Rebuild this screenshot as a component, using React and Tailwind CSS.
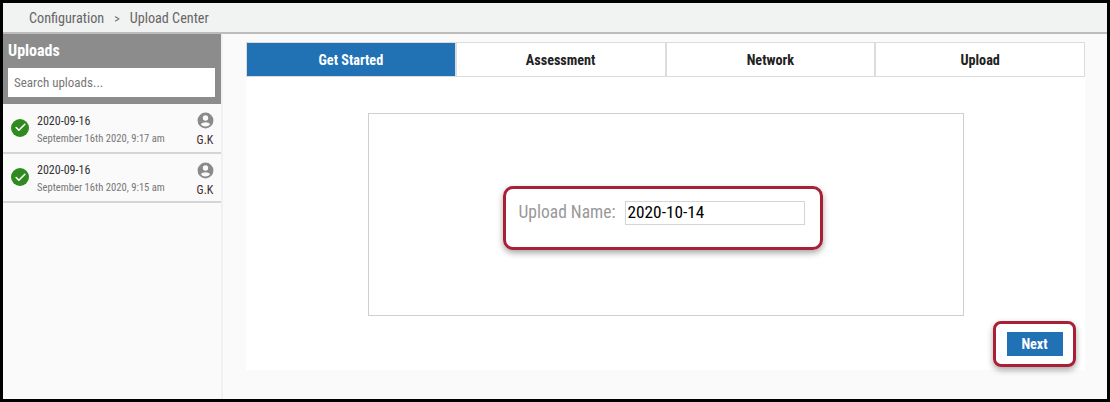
import React from 'react';
import { Check } from 'lucide-react';

const uploads = [
  { id: 1, name: '2020-09-16', when: 'September 16th 2020, 9:17 am', by: 'G.K' },
  { id: 2, name: '2020-09-16', when: 'September 16th 2020, 9:15 am', by: 'G.K' },
];
const tabs = ['Get Started', 'Assessment', 'Network', 'Upload'];

function UserIcon() {
  return (
    <svg viewBox="0 0 24 24" className="w-[19px] h-[19px]" fill="#8a8a8a">
      <path d="M12 2a10 10 0 1 0 0 20 10 10 0 0 0 0-20zm0 3.4a3.4 3.4 0 1 1 0 6.8 3.4 3.4 0 0 1 0-6.8zm0 14.3a7.7 7.7 0 0 1-6-2.9c.9-1.7 3.9-2.6 6-2.6s5.1.9 6 2.6a7.7 7.7 0 0 1-6 2.9z" />
    </svg>
  );
}

function UploadRow({ item }) {
  return (
    <div className="h-[49.5px] flex items-center pl-2 pr-[7px] border-b-2 border-[#d4d6d6]">
      <div className="w-[18px] h-[18px] rounded-full bg-[#2f8a1f] flex items-center justify-center shrink-0">
        <Check size={13} strokeWidth={3} color="#fff" />
      </div>
      <div className="ml-2 flex-1 pt-[4px]">
        <div className="text-[12px] leading-[16px] text-[#333] [font-stretch:75%]">{item.name}</div>
        <div className="text-[10.6px] leading-[16px] mt-[2px] text-[#777] [font-stretch:75%]">{item.when}</div>
      </div>
      <div className="w-[18px] flex flex-col items-center pt-[3px]">
        <UserIcon />
        <div className="text-[12px] leading-[14px] mt-[3px] text-[#4a2a30] [font-stretch:75%]">{item.by}</div>
      </div>
    </div>
  );
}

export default function App() {
  return (
    <div className="w-[1110px] h-[402px] overflow-hidden border-[3px] border-black flex flex-col bg-[#fafafa] font-['Roboto',sans-serif]">
      <div className="h-[31px] shrink-0 bg-[#f1f2f2] border-b-2 border-[#bcbcbc] flex items-center pl-[26px] pt-[3px] text-[14.2px] text-[#666] [font-stretch:75%]">
        <span>Configuration</span>
        <span className="mx-[10px] text-[12px]">&gt;</span>
        <span>Upload Center</span>
      </div>
      <div className="flex flex-1 min-h-0">
        <aside className="w-[220px] shrink-0 border-r-2 border-[#f1f1f1] bg-[#fafafa]">
          <div className="h-[70px] bg-[#8c8c8c] px-[5px] pt-[6px]">
            <div className="text-[16px] leading-[20px] pt-[1px] font-bold text-white [font-stretch:75%]">Uploads</div>
            <input
              placeholder="Search uploads..."
              className="mt-[7px] w-[207px] h-[29px] bg-white px-[6px] text-[13px] outline-none placeholder:text-[#777] [font-stretch:75%]"
            />
          </div>
          {uploads.map(u => <UploadRow key={u.id} item={u} />)}
        </aside>
        <main className="flex-1 pl-[23px] pr-[22px] pt-[8px]">
          <div className="h-[328px] bg-white flex flex-col">
            <div className="flex h-[35px] shrink-0">
              {tabs.map((t, i) => (
                <div
                  key={t}
                  className={`flex-1 flex items-center justify-center pt-[3px] text-[14.2px] font-bold [font-stretch:75%] border border-[#dcdcdc] ${i === 0 ? 'bg-[#2072b5] text-white' : 'bg-white text-[#222]'}`}
                >
                  {t}
                </div>
              ))}
            </div>
            <div className="mt-[36px] ml-[122px] w-[596px] h-[203px] shrink-0 border border-[#cfcfcf] flex items-center justify-center">
              <div className="w-[320px] h-[64px] mr-[7px] mt-[6px] pb-[10px] rounded-[10px] border-[3px] border-[#a92036] shadow-[0_3px_6px_rgba(0,0,0,0.35)] flex items-center pl-[13px]">
                <span className="text-[17.5px] text-[#999] [font-stretch:75%]">Upload Name:</span>
                <input
                  defaultValue="2020-10-14"
                  className="ml-[9px] w-[180px] h-[24px] border border-[#d5d5d5] px-[2px] text-[17.3px] text-black outline-none [font-stretch:87%]"
                />
              </div>
            </div>
            <div className="flex justify-end pr-[9px] mt-[5px]">
              <div className="w-[83px] h-[46px] rounded-[8px] border-[3px] border-[#a92036] shadow-[0_3px_6px_rgba(0,0,0,0.35)] flex items-center justify-center">
                <button className="w-[56px] h-[24px] pt-[2px] bg-[#2072b5] text-white text-[14.2px] font-bold [font-stretch:75%]">Next</button>
              </div>
            </div>
          </div>
        </main>
      </div>
    </div>
  );
}
